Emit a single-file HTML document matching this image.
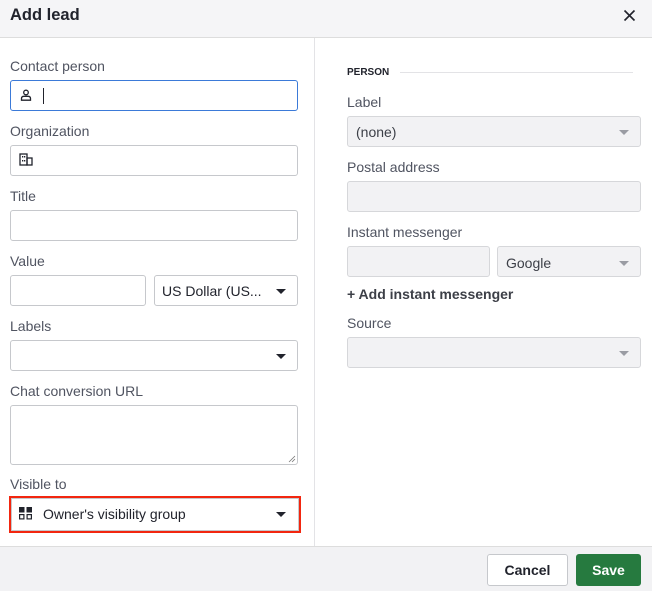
<!DOCTYPE html>
<html><head><style>
*{box-sizing:border-box;margin:0;padding:0}
body{width:652px;height:591px;background:#fff;font-family:"Liberation Sans",sans-serif;font-size:14px;color:#21232c;position:relative;overflow:hidden}
.a{position:absolute}
.hdr{left:0;top:0;width:652px;height:38px;background:#f5f5f7;border-bottom:1px solid #ddd}
.lbl{color:#505461;font-size:14px}
.in{border:1px solid #c6c8cc;border-radius:3px;background:#fff}
.g{background:#f2f2f4;border:1px solid #d6d7da;border-radius:3px}
.tri{width:0;height:0;border-left:5px solid transparent;border-right:5px solid transparent;border-top:5px solid #21232c}
.tg{border-top-color:#9a9ca3}
</style></head><body>
<div class="a hdr"></div>
<div class="a" style="left:10px;top:6px;font-size:16.5px;font-weight:bold">Add lead</div>
<svg class="a" style="left:623px;top:9px" width="13" height="13"><path d="M1.5 1.5L11.5 11.5M11.5 1.5L1.5 11.5" stroke="#21232c" stroke-width="1.6"/></svg>
<div class="a" style="left:314px;top:38px;width:1px;height:508px;background:#e3e3e6"></div>

<div class="a lbl" style="left:10px;top:58px">Contact person</div>
<div class="a in" style="left:10px;top:80px;width:288px;height:31px;border-color:#3b7ad8"></div>
<svg class="a" style="left:20px;top:89px" width="12" height="12"><circle cx="6" cy="3.5" r="2.3" fill="none" stroke="#21232c" stroke-width="1.3"/><path d="M1.5 11.2V9.5Q1.5 7.3 4 7.3H8Q10.5 7.3 10.5 9.5V11.2Z" fill="none" stroke="#21232c" stroke-width="1.3"/></svg>
<div class="a" style="left:43px;top:88px;width:1px;height:16px;background:#21232c"></div>

<div class="a lbl" style="left:10px;top:123px">Organization</div>
<div class="a in" style="left:10px;top:145px;width:288px;height:31px"></div>
<svg class="a" style="left:19px;top:153px" width="14" height="13"><rect x="1" y="1" width="7" height="11" fill="none" stroke="#21232c" stroke-width="1.3"/><rect x="8" y="5" width="5" height="7" fill="none" stroke="#21232c" stroke-width="1.3"/><rect x="3" y="3" width="1.3" height="1.5" fill="#21232c"/><rect x="5" y="3" width="1.3" height="1.5" fill="#21232c"/><rect x="3" y="7" width="1.3" height="1.5" fill="#21232c"/><rect x="5" y="7" width="1.3" height="1.5" fill="#21232c"/></svg>

<div class="a lbl" style="left:10px;top:188px">Title</div>
<div class="a in" style="left:10px;top:210px;width:288px;height:31px"></div>

<div class="a lbl" style="left:10px;top:253px">Value</div>
<div class="a in" style="left:10px;top:275px;width:136px;height:31px"></div>
<div class="a in" style="left:154px;top:275px;width:144px;height:31px"></div>
<div class="a" style="left:162px;top:283px">US Dollar (US...</div>
<div class="a tri" style="left:276px;top:289px"></div>

<div class="a lbl" style="left:10px;top:318px">Labels</div>
<div class="a in" style="left:10px;top:340px;width:288px;height:31px"></div>
<div class="a tri" style="left:276px;top:354px"></div>

<div class="a lbl" style="left:10px;top:383px">Chat conversion URL</div>
<div class="a in" style="left:10px;top:405px;width:288px;height:60px"></div>
<svg class="a" style="left:288px;top:455px" width="8" height="8"><path d="M1 7L7 1M4 7L7 4" stroke="#777" stroke-width="0.8"/></svg>

<div class="a lbl" style="left:10px;top:476px">Visible to</div>
<div class="a" style="left:9px;top:496px;width:292px;height:37px;border:2px solid #f2260f"></div>
<div class="a" style="left:11px;top:498px;width:288px;height:33px;border:1px solid #c6c8cc"></div>
<svg class="a" style="left:19px;top:507px" width="13" height="13"><rect x="0" y="0" width="5.5" height="5.5" fill="#21232c"/><rect x="7.5" y="0" width="5.5" height="5.5" fill="#21232c"/><rect x="0.6" y="7.6" width="4.3" height="4.3" fill="none" stroke="#21232c" stroke-width="1.2"/><rect x="8.1" y="7.6" width="4.3" height="4.3" fill="none" stroke="#21232c" stroke-width="1.2"/></svg>
<div class="a" style="left:43px;top:506px">Owner's visibility group</div>
<div class="a tri" style="left:276px;top:512px"></div>

<div class="a" style="left:347px;top:67px;font-size:10px;font-weight:bold">PERSON</div>
<div class="a" style="left:400px;top:72px;width:233px;height:1px;background:#e3e3e6"></div>
<div class="a lbl" style="left:347px;top:94px">Label</div>
<div class="a g" style="left:347px;top:116px;width:294px;height:31px"></div>
<div class="a" style="left:356px;top:124px;color:#3c3f47">(none)</div>
<div class="a tri tg" style="left:619px;top:130px"></div>
<div class="a lbl" style="left:347px;top:159px">Postal address</div>
<div class="a g" style="left:347px;top:181px;width:294px;height:31px"></div>
<div class="a lbl" style="left:347px;top:224px">Instant messenger</div>
<div class="a g" style="left:347px;top:246px;width:143px;height:31px"></div>
<div class="a g" style="left:497px;top:246px;width:144px;height:31px"></div>
<div class="a" style="left:506px;top:255px;color:#3c3f47">Google</div>
<div class="a tri tg" style="left:619px;top:261px"></div>
<div class="a" style="left:347px;top:286px;font-weight:bold;color:#3c3f47">+ Add instant messenger</div>
<div class="a lbl" style="left:347px;top:315px">Source</div>
<div class="a g" style="left:347px;top:337px;width:294px;height:31px"></div>
<div class="a tri tg" style="left:619px;top:351px"></div>

<div class="a" style="left:0;top:546px;width:652px;height:45px;background:#f2f2f4;border-top:1px solid #ddd"></div>
<div class="a" style="left:487px;top:554px;width:81px;height:32px;background:#fff;border:1px solid #c6c8cc;border-radius:3px;font-weight:bold;text-align:center;line-height:30px">Cancel</div>
<div class="a" style="left:576px;top:554px;width:65px;height:32px;background:#267a3f;border-radius:3px;font-weight:bold;color:#fff;text-align:center;line-height:32px">Save</div>
</body></html>
